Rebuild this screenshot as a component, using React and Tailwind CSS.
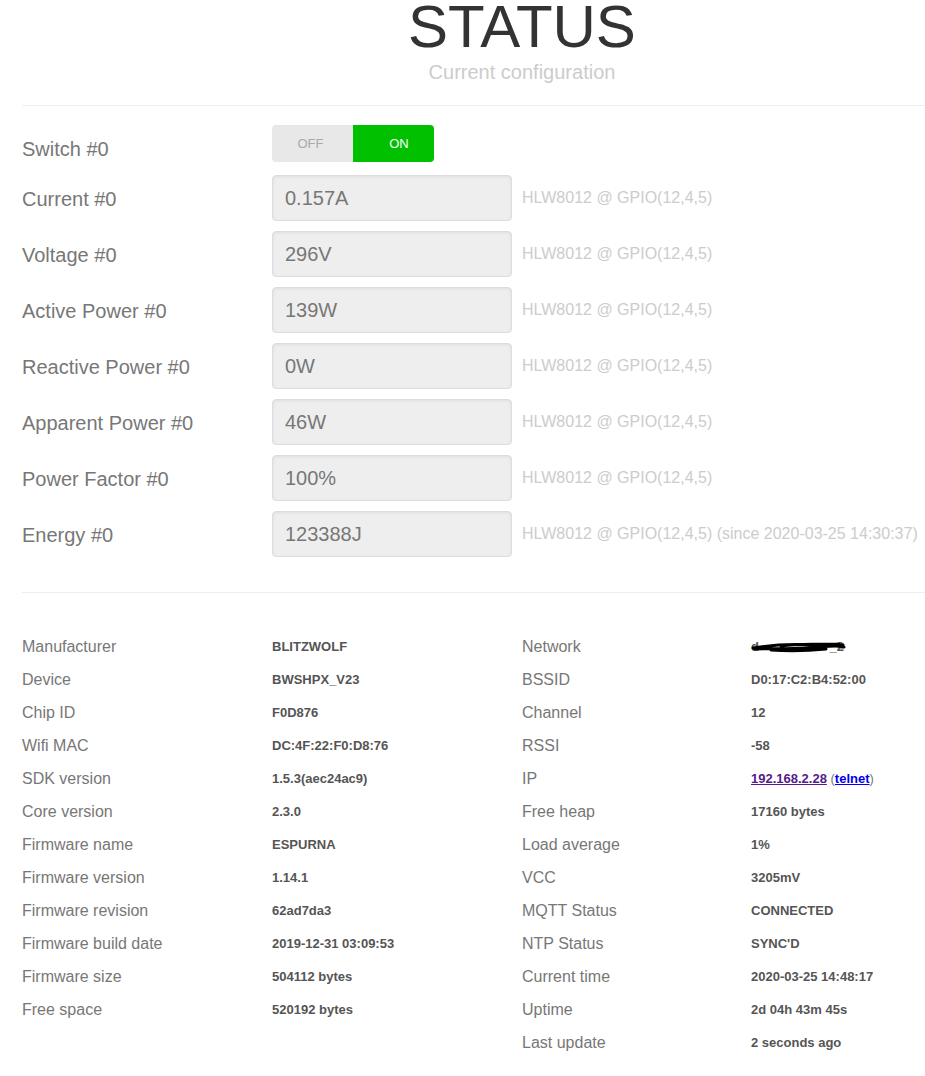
const sensors = [
  { label: 'Current #0', value: '0.157A' },
  { label: 'Voltage #0', value: '296V' },
  { label: 'Active Power #0', value: '139W' },
  { label: 'Reactive Power #0', value: '0W' },
  { label: 'Apparent Power #0', value: '46W' },
  { label: 'Power Factor #0', value: '100%' },
  { label: 'Energy #0', value: '123388J', since: '2020-03-25 14:30:37' },
];

const deviceInfo = [
  ['Manufacturer', 'BLITZWOLF'],
  ['Device', 'BWSHPX_V23'],
  ['Chip ID', 'F0D876'],
  ['Wifi MAC', 'DC:4F:22:F0:D8:76'],
  ['SDK version', '1.5.3(aec24ac9)'],
  ['Core version', '2.3.0'],
  ['Firmware name', 'ESPURNA'],
  ['Firmware version', '1.14.1'],
  ['Firmware revision', '62ad7da3'],
  ['Firmware build date', '2019-12-31 03:09:53'],
  ['Firmware size', '504112 bytes'],
  ['Free space', '520192 bytes'],
];

const networkInfo = [
  ['Network', null],
  ['BSSID', 'D0:17:C2:B4:52:00'],
  ['Channel', '12'],
  ['RSSI', '-58'],
  ['IP', 'ip'],
  ['Free heap', '17160 bytes'],
  ['Load average', '1%'],
  ['VCC', '3205mV'],
  ['MQTT Status', 'CONNECTED'],
  ['NTP Status', "SYNC'D"],
  ['Current time', '2020-03-25 14:48:17'],
  ['Uptime', '2d 04h 43m 45s'],
  ['Last update', '2 seconds ago'],
];

// hidden SSID, crossed out with a marker
const Scribble = () => (
  <span className="relative inline-block w-[95px] h-[16px] align-middle">
    <span className="absolute left-0 top-0 text-[13px] leading-[16px] text-[#555]">d</span>
    <span className="absolute right-[2px] top-0 text-[13px] leading-[16px] text-[#555]">_2</span>
    <svg className="absolute inset-0" width="95" height="16" viewBox="0 0 95 16">
      <path
        d="M2 9 C20 6 40 5 60 6 S85 5 92 6 M4 10 C25 9 45 11 70 8 S88 9 93 8 M20 11 C35 12 55 12 75 10 M30 7 C50 4 65 6 88 5"
        fill="none"
        stroke="#000"
        strokeWidth="3"
        strokeLinecap="round"
      />
    </svg>
  </span>
);

const InfoValue = ({ value }) => {
  if (value === null) return <Scribble />;
  if (value === 'ip') {
    return (
      <span className="text-[#777] font-normal">
        <a href="#" className="font-bold text-[#551a8b] underline">192.168.2.28</a>
        {' ('}
        <a href="#" className="font-bold text-[#0000ee] underline">telnet</a>
        {')'}
      </span>
    );
  }
  return <span>{value}</span>;
};

const InfoColumn = ({ rows, labelWidth }) => (
  <div className="flex flex-col">
    {rows.map(([label, value]) => (
      <div key={label} className="flex items-center h-[33px]">
        <div className={`${labelWidth} shrink-0 text-[16px] text-[#777]`}>{label}</div>
        <div className="text-[13px] font-bold text-[#555]">
          <InfoValue value={value} />
        </div>
      </div>
    ))}
  </div>
);

export default function App() {
  return (
    <div className="w-[925px] overflow-hidden bg-white font-['Liberation_Sans',Arial,sans-serif]">
      <div className="ml-[22px] w-[1000px]">
        {/* Header */}
        <div className="text-center">
          <h1 className="text-[60px] leading-[54px] text-[#333]">STATUS</h1>
          <h2 className="mt-[6px] text-[20px] leading-[24px] text-[#ccc]">Current configuration</h2>
        </div>

        <div className="mt-[21px] h-px bg-[#eee]" />

        {/* Relay and sensor readings */}
        <div className="pt-[19px]">
          <div className="flex items-start mb-[13px]">
            <div className="w-[250px] pt-[12px] text-[20px] leading-[24px] text-[#777]">Switch #0</div>
            <div className="flex h-[37px] w-[162px] rounded-[4px] overflow-hidden text-[13px]">
              <div className="flex w-[81px] items-center justify-center pr-[4px] bg-[#e8e8e8] text-[#aaa]">OFF</div>
              <div className="flex w-[81px] items-center justify-center pl-[11px] bg-[#00c000] text-white">ON</div>
            </div>
          </div>

          {sensors.map((s) => (
            <div key={s.label} className="flex items-start mt-[10px] first-of-type:mt-0">
              <div className="w-[250px] pt-[12px] text-[20px] leading-[24px] text-[#777]">{s.label}</div>
              <div className="flex h-[46px] w-[240px] items-center rounded-[4px] border border-[#ddd] bg-[#eee] pl-[12px] text-[20px] text-[#777] shadow-[inset_0_1px_3px_#ddd]">
                {s.value}
              </div>
              <div className="ml-[10px] flex h-[46px] items-center text-[16px] text-[#ccc] whitespace-nowrap">
                HLW8012 @ GPIO(12,4,5){s.since && ` (since ${s.since})`}
              </div>
            </div>
          ))}
        </div>

        <div className="mt-[35px] h-px bg-[#eee]" />

        {/* General info */}
        <div className="flex pt-[37px] pb-[20px]">
          <div className="w-[500px]">
            <InfoColumn rows={deviceInfo} labelWidth="w-[250px]" />
          </div>
          <div>
            <InfoColumn rows={networkInfo} labelWidth="w-[229px]" />
          </div>
        </div>
      </div>
    </div>
  );
}
